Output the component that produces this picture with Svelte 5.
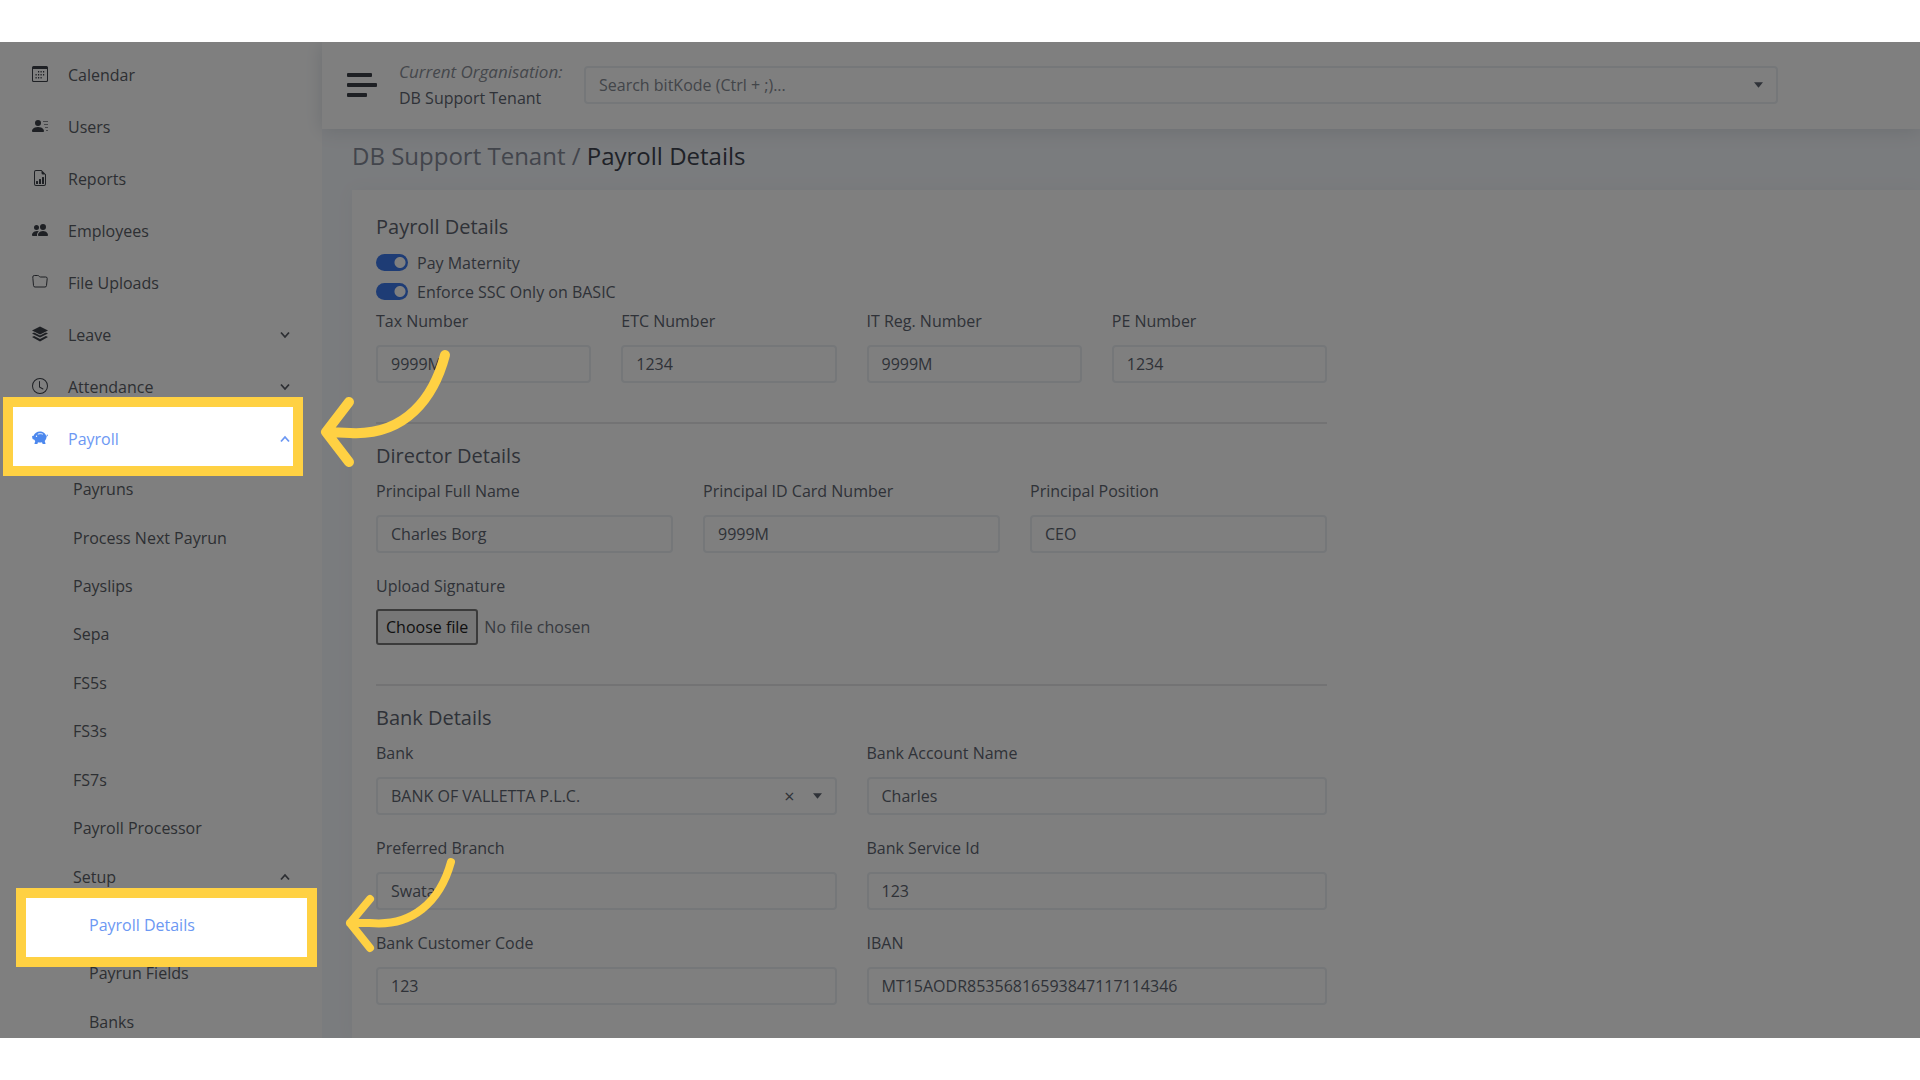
<script>
  const menu = [
    { label: 'Calendar', icon: 'calendar' },
    { label: 'Users', icon: 'users' },
    { label: 'Reports', icon: 'report' },
    { label: 'Employees', icon: 'people' },
    { label: 'File Uploads', icon: 'folder' },
    { label: 'Leave', icon: 'layers', chevron: 'down' },
    { label: 'Attendance', icon: 'clock', chevron: 'down' },
    { label: 'Payroll', icon: 'piggy', chevron: 'up', active: true },
  ];
  const submenu = [
    { label: 'Payruns' },
    { label: 'Process Next Payrun' },
    { label: 'Payslips' },
    { label: 'Sepa' },
    { label: 'FS5s' },
    { label: 'FS3s' },
    { label: 'FS7s' },
    { label: 'Payroll Processor' },
    { label: 'Setup', chevron: 'up' },
    { label: 'Payroll Details', nested: true, active: true },
    { label: 'Payrun Fields', nested: true },
    { label: 'Banks', nested: true },
  ];

  let maternity = $state(true);
  let enforceSsc = $state(true);

  const numbers = [
    { id: 'tax', label: 'Tax Number', value: '9999M' },
    { id: 'etc', label: 'ETC Number', value: '1234' },
    { id: 'itreg', label: 'IT Reg. Number', value: '9999M' },
    { id: 'pe', label: 'PE Number', value: '1234' },
  ];
  const director = [
    { id: 'name', label: 'Principal Full Name', value: 'Charles Borg' },
    { id: 'idcard', label: 'Principal ID Card Number', value: '9999M' },
    { id: 'position', label: 'Principal Position', value: 'CEO' },
  ];
  const bank = [
    { id: 'account', label: 'Bank Account Name', value: 'Charles' },
    { id: 'branch', label: 'Preferred Branch', value: 'Swatar' },
    { id: 'service', label: 'Bank Service Id', value: '123' },
    { id: 'customer', label: 'Bank Customer Code', value: '123' },
    { id: 'iban', label: 'IBAN', value: 'MT15AODR85356816593847117114346' },
  ];
</script>

{#snippet chevron(direction)}
  <svg class="chevron" viewBox="0 0 10 8" fill="none" stroke="currentColor" stroke-width="1.8">
    {#if direction === 'up'}
      <path d="M1 6.5L5 2l4 4.5" />
    {:else}
      <path d="M1 1.5L5 6l4-4.5" />
    {/if}
  </svg>
{/snippet}

{#snippet field(item)}
  <div class="field">
    <label for={item.id}>{item.label}</label>
    <input id={item.id} type="text" value={item.value} />
  </div>
{/snippet}

<main>
  <div class="frame">
    <nav class="sidebar">
      <ul class="menu">
        {#each menu as item}
          <li>
            <a href="#{item.icon}" class:active={item.active}>
              <svg class="icon" viewBox="0 0 16 16" fill="currentColor">
                {#if item.icon === 'calendar'}
                  <path fill-rule="evenodd" d="M1.500 0h13A1.500 1.500 0 0 1 16 1.500v13a1.500 1.500 0 0 1-1.500 1.500h-13A1.500 1.500 0 0 1 0 14.500v-13A1.500 1.500 0 0 1 1.500 0zM1 3v11.300c0 .4.3.7.7.7h12.600c.4 0 .7-.3.7-.7V3z" />
                  <path d="M6 5h1.200v1.500H6zM8.500 5h1.200v1.500H8.500zM11 5h1.200v1.500H11zM3.500 8h1.200v1.500H3.500zM6 8h1.200v1.500H6zM8.500 8h1.200v1.500H8.500zM11 8h1.200v1.500H11zM3.500 11h1.200v1.500H3.500zM6 11h1.200v1.500H6zM8.500 11h1.200v1.500H8.500z" />
                {:else if item.icon === 'users'}
                  <path d="M6 8a3 3 0 1 0 0-6 3 3 0 0 0 0 6zm-5 6s-1 0-1-1 1-4 6-4 6 3 6 4-1 1-1 1H1z" />
                  <path opacity=".6" d="M11 3h5v1h-5zM12 6h4v1h-4zM13 9h3v1h-3zM14 12h2v1h-2z" />
                {:else if item.icon === 'report'}
                  <path d="M10 13.500a.5.5 0 0 0 .5.5h1a.5.5 0 0 0 .5-.5v-6a.5.5 0 0 0-.5-.5h-1a.5.5 0 0 0-.5.5v6zm-2.500.5a.5.5 0 0 1-.5-.5v-4a.5.5 0 0 1 .5-.5h1a.5.5 0 0 1 .5.5v4a.5.5 0 0 1-.5.5h-1zm-3 0a.5.5 0 0 1-.5-.5v-2a.5.5 0 0 1 .5-.5h1a.5.5 0 0 1 .5.5v2a.5.5 0 0 1-.5.5h-1z" />
                  <path d="M14 14V4.500L9.500 0H4a2 2 0 0 0-2 2v12a2 2 0 0 0 2 2h8a2 2 0 0 0 2-2zM9.500 3A1.500 1.500 0 0 0 11 4.500h2V14a1 1 0 0 1-1 1H4a1 1 0 0 1-1-1V2a1 1 0 0 1 1-1h5.500v2z" />
                {:else if item.icon === 'people'}
                  <path d="M7 14s-1 0-1-1 1-4 5-4 5 3 5 4-1 1-1 1H7zm4-6a3 3 0 1 0 0-6 3 3 0 0 0 0 6z" />
                  <path d="M5.200 14A2.200 2.200 0 0 1 5 13c0-1.400.7-2.800 1.900-3.700A6 6 0 0 0 5 9c-4 0-5 3-5 4s1 1 1 1h4.200zM4.500 8a2.500 2.500 0 1 0 0-5 2.500 2.500 0 0 0 0 5z" />
                {:else if item.icon === 'folder'}
                  <path fill="none" stroke="currentColor" d="M.9 4.500L.8 3a1.500 1.500 0 0 1 1.500-1.500h3.400c.5 0 .9.2 1.200.5l.6.6c.3.3.7.4 1.100.4h5.100a1.500 1.500 0 0 1 1.500 1.600l-.7 7a1.500 1.500 0 0 1-1.500 1.400H3a1.500 1.500 0 0 1-1.500-1.400z" />
                {:else if item.icon === 'layers'}
                  <path d="M8 .5l8 4-8 4-8-4zM2.100 6.600L0 7.600l8 4 8-4-2.100-1L8 9.600zM2.100 10L0 11l8 4.500L16 11l-2.100-1L8 13z" />
                {:else if item.icon === 'clock'}
                  <path d="M8 3.500a.5.5 0 0 0-1 0V9a.5.5 0 0 0 .25.43l3.500 2a.5.5 0 0 0 .5-.86L8 8.700V3.500z" />
                  <path d="M8 16A8 8 0 1 0 8 0a8 8 0 0 0 0 16zm7-8A7 7 0 1 1 1 8a7 7 0 0 1 14 0z" />
                {:else}
                  <path d="M7.960 1.530c-2.980 0-5.570 1.700-6.320 4.120h-.55A1 1 0 0 0 .11 6.820l.25 1.460a1.500 1.500 0 0 0 1.480 1.250h.26c.3.510.69.980 1.150 1.380l-.73 2.480a.5.5 0 0 0 .48.640h2a.5.5 0 0 0 .47-.33l.48-1.350c.64.170 1.310.27 2.010.27.71 0 1.390-.1 2.030-.27l.54 1.370a.5.5 0 0 0 .47.310h2a.5.5 0 0 0 .48-.64l-.76-2.510c1.080-.99 1.770-2.320 1.770-3.810 0-.15 0-.29-.02-.43.55-.24 1.150-.7 1.320-1.140a.6.6 0 0 0-.91-.74c-.36.200-.49.800-.06 1.220l-.58.150c-.53-2.660-3.280-4.600-6.440-4.600z" />
                  <circle cx="4.500" cy="6.200" r=".7" fill="#fff" />
                  <path d="M5.800 4.200c1.500-.7 3.500-.7 5 0" fill="none" stroke="#fff" stroke-width=".9" />
                {/if}
              </svg>
              <span>{item.label}</span>
              {#if item.chevron}{@render chevron(item.chevron)}{/if}
            </a>
          </li>
        {/each}
      </ul>
      <ul class="submenu">
        {#each submenu as item}
          <li>
            <a href="#{item.label}" class:active={item.active} class:nested={item.nested}>
              <span>{item.label}</span>
              {#if item.chevron}{@render chevron(item.chevron)}{/if}
            </a>
          </li>
        {/each}
      </ul>
    </nav>

    <div class="page">
      <header>
        <button class="burger" aria-label="Toggle menu"><i></i><i></i><i></i></button>
        <div class="tenant">
          <em>Current Organisation:</em>
          <span>DB Support Tenant</span>
        </div>
        <div class="search">
          <input type="text" placeholder="Search bitKode (Ctrl + ;)..." aria-label="Search bitKode" />
          <svg class="caret" viewBox="0 0 10 6" fill="currentColor"><path d="M0 0h10L5 6z" /></svg>
        </div>
      </header>

      <h1><a href="#tenant">DB Support Tenant</a> / <span>Payroll Details</span></h1>

      <form class="card">
        <div class="content">
          <section>
            <h2>Payroll Details</h2>
            <div class="switches">
              <label><input type="checkbox" bind:checked={maternity} />Pay Maternity</label>
              <label><input type="checkbox" bind:checked={enforceSsc} />Enforce SSC Only on BASIC</label>
            </div>
            <div class="row four">
              {#each numbers as item}{@render field(item)}{/each}
            </div>
          </section>

          <section>
            <h2>Director Details</h2>
            <div class="row three">
              {#each director as item}{@render field(item)}{/each}
            </div>
            <div class="upload">
              <label for="signature">Upload Signature</label>
              <input id="signature" class="file-input" type="file" />
              <div class="file">
                <label class="choose" for="signature">Choose file</label>
                <span>No file chosen</span>
              </div>
            </div>
          </section>

          <section>
            <h2>Bank Details</h2>
            <div class="row two">
              <div class="field">
                <label for="bank">Bank</label>
                <div class="select">
                  <select id="bank">
                    <option>BANK OF VALLETTA P.L.C.</option>
                  </select>
                  <button type="button" class="clear" aria-label="Clear bank">×</button>
                  <svg class="caret" viewBox="0 0 10 6" fill="currentColor"><path d="M0 0h10L5 6z" /></svg>
                </div>
              </div>
              {#each bank as item}{@render field(item)}{/each}
            </div>
          </section>
        </div>
      </form>
    </div>

    <!-- dimmed layer with two cut-outs, frames and arrows -->
    <svg class="guide">
      <defs>
        <mask id="holes">
          <rect width="100%" height="100%" fill="#fff" />
          <rect x="8" y="360" width="290" height="68" fill="#000" />
          <rect x="22" y="851" width="290" height="68" fill="#000" />
        </mask>
      </defs>
      <rect width="100%" height="100%" mask="url(#holes)" />
      <g fill="none" stroke="#ffd143" stroke-linecap="round" stroke-linejoin="round">
        <g stroke-width="10" stroke-linejoin="miter">
          <rect x="8" y="360" width="290" height="69" />
          <rect x="21" y="851" width="291" height="69" />
        </g>
        <path stroke-width="10" d="M445 313C434 355 406 394 350 391L327 390M349 360L326 390L349 420" />
        <path stroke-width="8" d="M451 820C440 860 412 885 370 881L350 881M370 857L350 881L370 906" />
      </g>
    </svg>
  </div>
</main>

<style>
  :global(body) {
    margin: 0;
    background: #fff;
  }
  main {
    box-sizing: border-box;
    height: 100vh;
    padding: 42px 0;
    font: 16px/24px 'Open Sans', 'Noto Sans', sans-serif;
    font-kerning: none;
    color: #5e6570;
  }
  .frame {
    position: relative;
    display: flex;
    height: 100%;
    overflow: hidden;
    background: #f5f8fc;
  }
  ul {
    list-style: none;
    margin: 0;
    padding: 0;
  }
  a {
    color: inherit;
    text-decoration: none;
  }
  .sidebar {
    flex: 0 0 322px;
    padding-top: 7px;
    box-sizing: border-box;
    background: #fff;
    color: #5a5e66;
  }
  .sidebar a {
    display: flex;
    align-items: center;
    height: 100%;
    padding: 0 32px;
  }
  .sidebar .active {
    color: #6c98f3;
  }
  .menu li {
    height: 52px;
  }
  .icon {
    width: 16px;
    height: 16px;
    margin: 0 20px 2px 0;
    color: #3c4048;
  }
  .active .icon {
    color: #4c88ee;
  }
  .chevron {
    width: 10px;
    height: 8px;
    margin-left: auto;
  }
  .submenu {
    display: grid;
    grid-auto-rows: 1fr;
    height: 581px;
  }
  .submenu a {
    padding-left: 73px;
  }
  .submenu .nested {
    padding-left: 89px;
  }
  .page {
    flex: 1;
    min-width: 0;
    display: flex;
    flex-direction: column;
  }
  header {
    display: flex;
    align-items: center;
    height: 87px;
    flex: none;
    box-sizing: border-box;
    padding: 0 142px 2px 25px;
    background: #fff;
    box-shadow: 0 2px 18px #d8dde3;
  }
  .burger {
    display: grid;
    gap: 6px;
    width: 30px;
    margin-right: 22px;
    padding: 0;
    border: 0;
    background: none;
  }
  .burger i {
    height: 4px;
    border-radius: 1px;
    background: #3c4048;
  }
  .burger i:first-child {
    width: 25px;
  }
  .burger i:last-child {
    width: 20px;
  }
  .tenant {
    flex: 0 0 185px;
    display: flex;
    flex-direction: column;
    line-height: 26px;
    white-space: nowrap;
  }
  .tenant em {
    font-size: 17px;
    color: #8a8f98;
  }
  .search,
  .select {
    flex: 1;
    display: flex;
    align-items: center;
    height: 38px;
    box-sizing: border-box;
    border: 2px solid #ebeef3;
    border-radius: 4px;
    background: #fff;
  }
  .search input,
  .select select {
    flex: 1;
    min-width: 0;
    padding: 0 13px;
    border: 0;
    outline: 0;
    appearance: none;
    background: none;
    font: inherit;
    font-kerning: inherit;
    color: inherit;
  }
  .search input::placeholder {
    color: #858a93;
  }
  .caret {
    width: 9px;
    height: 6px;
    margin-right: 13px;
    color: #5e6570;
  }
  h1 {
    margin: 11px 0 18px 30px;
    font-size: 24px;
    line-height: 32px;
    font-weight: 400;
    color: #858b98;
  }
  h1 span {
    color: #3f4550;
  }
  .card {
    flex: 1 0 auto;
    margin-left: 30px;
    padding: 24px;
    background: #fff;
    box-shadow: 0 0 16px #edf0f5;
  }
  .content {
    width: 67%;
    max-width: 951px;
  }
  section + section {
    margin-top: 39px;
    padding-top: 19px;
    border-top: 2px solid #e6e7e9;
  }
  h2 {
    margin: 0 0 10px;
    font-size: 20px;
    line-height: 26px;
    font-weight: 400;
  }
  .switches {
    margin: -2px 0 3px;
  }
  .switches label {
    display: flex;
    align-items: center;
    gap: 9px;
    height: 29px;
  }
  .switches input {
    appearance: none;
    width: 32px;
    height: 17px;
    margin: 0;
    border-radius: 9px;
    background: radial-gradient(circle at 24px 50%, #fff 5px, #3c78ea 6px);
  }
  .row {
    display: grid;
    gap: 21px 30px;
  }
  .four {
    grid-template-columns: repeat(4, 1fr);
  }
  .three {
    grid-template-columns: repeat(3, 1fr);
  }
  .two {
    grid-template-columns: repeat(2, 1fr);
  }
  .field {
    display: grid;
    gap: 12px;
    min-width: 0;
  }
  .field > input {
    box-sizing: border-box;
    width: 100%;
    height: 38px;
    padding: 0 13px;
    border: 2px solid #ebeef3;
    border-radius: 4px;
    background: #fff;
    font: inherit;
    font-kerning: inherit;
    color: inherit;
  }
  .clear {
    padding: 0;
    margin-right: 18px;
    border: 0;
    background: none;
    font: inherit;
    font-size: 18px;
    color: inherit;
  }
  .upload {
    margin-top: 21px;
  }
  .file-input {
    position: absolute;
    opacity: 0;
    pointer-events: none;
  }
  .file {
    display: flex;
    align-items: center;
    gap: 6px;
    margin-top: 11px;
    color: #6e747f;
  }
  .choose {
    padding: 4px 8px;
    border: 2px solid #767676;
    border-radius: 3px;
    background: #efefef;
    color: #222;
  }
  .guide {
    position: absolute;
    inset: 0;
    width: 100%;
    height: 100%;
    pointer-events: none;
    fill: rgba(0, 0, 0, 0.5);
  }
</style>
